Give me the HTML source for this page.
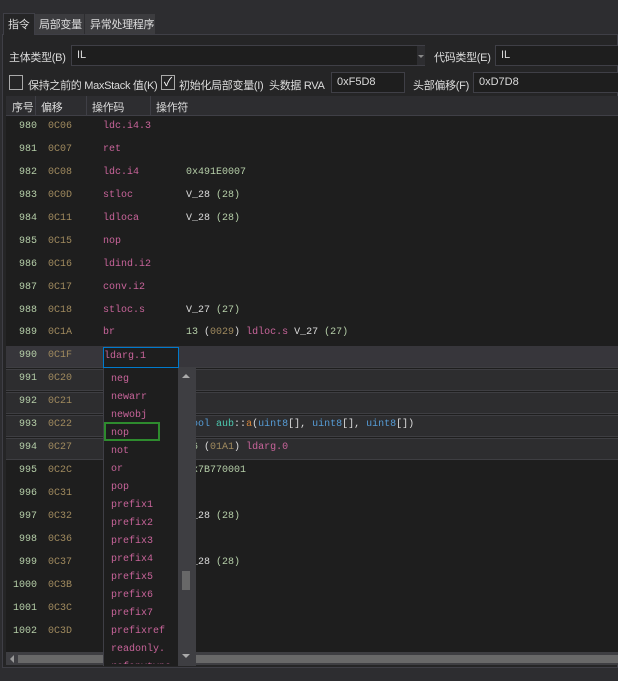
<!DOCTYPE html>
<html><head><meta charset="utf-8"><style>
*{margin:0;padding:0;box-sizing:border-box}
body{width:618px;height:681px;background:#2d2d30;position:relative;overflow:hidden;font-family:"Liberation Sans","Noto Sans CJK SC",sans-serif;font-size:11px;color:#dcdcdc}
.a{position:absolute}
.mono{font-family:"Liberation Mono","Noto Sans CJK SC",monospace;font-size:10px;white-space:pre}
.n{color:#b5cea8}.o{color:#a08a5e}.p{color:#c8649a}.w{color:#dcdcdc}.g{color:#b5cea8}.t{color:#4ec9b0}.b{color:#569cd6}.or{color:#d7873c}
.lab{position:absolute;font-size:11px;color:#dcdcdc;white-space:nowrap;letter-spacing:-0.3px}
.inp{position:absolute;background:#1e1e1e;border:1px solid #3f3f46;font-size:11px;padding-left:5px;line-height:18px;color:#dcdcdc}
</style></head><body>
<div class="a" style="left:0;top:0;width:618px;height:13px;background:#2d2d30"></div>
<div class="a" style="left:2px;top:34px;width:616px;height:634px;background:#252526;border:1px solid #3f3f46"></div>
<div class="a" style="left:3px;top:13px;width:32px;height:22px;background:#252526;border:1px solid #3f3f46;border-bottom:none"></div>
<div class="lab" style="left:8px;top:16px">指令</div>
<div class="a" style="left:35px;top:14px;width:49px;height:20px;background:#3c3c3f"></div>
<div class="lab" style="left:39px;top:16px">局部变量</div>
<div class="a" style="left:85px;top:14px;width:70px;height:20px;background:#3c3c3f"></div>
<div class="lab" style="left:90px;top:16px">异常处理程序</div>

<div class="lab" style="left:9px;top:49px">主体类型(B)</div>
<div class="inp" style="left:71px;top:45px;width:354px;height:21px">IL</div>
<div class="a" style="left:417px;top:46px;width:8px;height:19px;background:#2d2d30"></div>
<div class="a" style="left:418px;top:55px;width:0;height:0;border-left:3px solid transparent;border-right:3px solid transparent;border-top:3px solid #888"></div>
<div class="lab" style="left:434px;top:49px">代码类型(E)</div>
<div class="inp" style="left:495px;top:45px;width:130px;height:21px">IL</div>

<div class="a" style="left:9px;top:75px;width:14px;height:15px;border:1px solid #aaa;background:#252526"></div>
<div class="lab" style="left:28px;top:77px">保持之前的 MaxStack 值(K)</div>
<div class="a" style="left:161px;top:75px;width:14px;height:15px;border:1px solid #aaa;background:#252526;color:#fff;font-size:12px;line-height:13px;text-align:center">✓</div>
<div class="lab" style="left:179px;top:77px">初始化局部变量(I)</div>
<div class="lab" style="left:269px;top:77px">头数据 RVA</div>
<div class="inp" style="left:331px;top:72px;width:74px;height:21px">0xF5D8</div>
<div class="lab" style="left:413px;top:77px">头部偏移(F)</div>
<div class="inp" style="left:473px;top:72px;width:150px;height:21px">0xD7D8</div>

<div class="a" style="left:6px;top:96px;width:612px;height:20px;background:#2d2d30;border-bottom:1px solid #3f3f46"></div>
<div class="a" style="left:35px;top:96px;width:1px;height:20px;background:#3f3f46"></div>
<div class="a" style="left:86px;top:96px;width:1px;height:20px;background:#3f3f46"></div>
<div class="a" style="left:150px;top:96px;width:1px;height:20px;background:#3f3f46"></div>
<div class="lab" style="left:12px;top:99px">序号</div>
<div class="lab" style="left:41px;top:99px">偏移</div>
<div class="lab" style="left:92px;top:99px">操作码</div>
<div class="lab" style="left:156px;top:99px">操作符</div>

<div class="a" style="left:6px;top:116px;width:612px;height:536px;background:#1e1e1e"></div>
<div class="a" style="left:6px;top:346px;width:612px;height:22px;background:#37363b;border-bottom:1px solid #3e3e42"></div>
<div class="a" style="left:6px;top:369px;width:612px;height:22px;background:#2d2d2f;border-top:1px solid #3e3e42;border-bottom:1px solid #3e3e42"></div>
<div class="a" style="left:6px;top:392px;width:612px;height:22px;background:#2d2d2f;border-top:1px solid #3e3e42;border-bottom:1px solid #3e3e42"></div>
<div class="a" style="left:6px;top:415px;width:612px;height:22px;background:#2d2d2f;border-top:1px solid #3e3e42;border-bottom:1px solid #3e3e42"></div>
<div class="a" style="left:6px;top:438px;width:612px;height:22px;background:#2d2d2f;border-top:1px solid #3e3e42;border-bottom:1px solid #3e3e42"></div>

<div class="mono">
<div class="a" style="left:0;top:121px"><span class="a n" style="left:19px">980</span><span class="a o" style="left:48px">0C06</span><span class="a p" style="left:103px">ldc.i4.3</span></div>
<div class="a" style="left:0;top:144px"><span class="a n" style="left:19px">981</span><span class="a o" style="left:48px">0C07</span><span class="a p" style="left:103px">ret</span></div>
<div class="a" style="left:0;top:167px"><span class="a n" style="left:19px">982</span><span class="a o" style="left:48px">0C08</span><span class="a p" style="left:103px">ldc.i4</span><span class="a g" style="left:186px">0x491E0007</span></div>
<div class="a" style="left:0;top:190px"><span class="a n" style="left:19px">983</span><span class="a o" style="left:48px">0C0D</span><span class="a p" style="left:103px">stloc</span><span class="a w" style="left:186px">V_28 <span class="g">(28)</span></span></div>
<div class="a" style="left:0;top:213px"><span class="a n" style="left:19px">984</span><span class="a o" style="left:48px">0C11</span><span class="a p" style="left:103px">ldloca</span><span class="a w" style="left:186px">V_28 <span class="g">(28)</span></span></div>
<div class="a" style="left:0;top:236px"><span class="a n" style="left:19px">985</span><span class="a o" style="left:48px">0C15</span><span class="a p" style="left:103px">nop</span></div>
<div class="a" style="left:0;top:259px"><span class="a n" style="left:19px">986</span><span class="a o" style="left:48px">0C16</span><span class="a p" style="left:103px">ldind.i2</span></div>
<div class="a" style="left:0;top:282px"><span class="a n" style="left:19px">987</span><span class="a o" style="left:48px">0C17</span><span class="a p" style="left:103px">conv.i2</span></div>
<div class="a" style="left:0;top:305px"><span class="a n" style="left:19px">988</span><span class="a o" style="left:48px">0C18</span><span class="a p" style="left:103px">stloc.s</span><span class="a w" style="left:186px">V_27 <span class="g">(27)</span></span></div>
<div class="a" style="left:0;top:327px"><span class="a n" style="left:19px">989</span><span class="a o" style="left:48px">0C1A</span><span class="a p" style="left:103px">br</span><span class="a g" style="left:186px">13 <span class="w">(</span><span class="o">0029</span><span class="w">)</span> <span class="p">ldloc.s</span> <span class="w">V_27</span> (27)</span></div>
<div class="a" style="left:0;top:350px"><span class="a n" style="left:19px">990</span><span class="a o" style="left:48px">0C1F</span></div>
<div class="a" style="left:0;top:373px"><span class="a n" style="left:19px">991</span><span class="a o" style="left:48px">0C20</span></div>
<div class="a" style="left:0;top:396px"><span class="a n" style="left:19px">992</span><span class="a o" style="left:48px">0C21</span></div>
<div class="a" style="left:0;top:419px"><span class="a n" style="left:19px">993</span><span class="a o" style="left:48px">0C22</span><span class="a w" style="left:186px"><span class="b">bool</span> <span class="t">aub</span>::<span class="or">a</span>(<span class="b">uint8</span>[], <span class="b">uint8</span>[], <span class="b">uint8</span>[])</span></div>
<div class="a" style="left:0;top:442px"><span class="a n" style="left:19px">994</span><span class="a o" style="left:48px">0C27</span><span class="a g" style="left:186px">16 <span class="w">(</span><span class="o">01A1</span><span class="w">)</span> <span class="p">ldarg.0</span></span></div>
<div class="a" style="left:0;top:465px"><span class="a n" style="left:19px">995</span><span class="a o" style="left:48px">0C2C</span><span class="a g" style="left:186px">0x7B770001</span></div>
<div class="a" style="left:0;top:488px"><span class="a n" style="left:19px">996</span><span class="a o" style="left:48px">0C31</span></div>
<div class="a" style="left:0;top:511px"><span class="a n" style="left:19px">997</span><span class="a o" style="left:48px">0C32</span><span class="a w" style="left:186px">V_28 <span class="g">(28)</span></span></div>
<div class="a" style="left:0;top:534px"><span class="a n" style="left:19px">998</span><span class="a o" style="left:48px">0C36</span></div>
<div class="a" style="left:0;top:557px"><span class="a n" style="left:19px">999</span><span class="a o" style="left:48px">0C37</span><span class="a w" style="left:186px">V_28 <span class="g">(28)</span></span></div>
<div class="a" style="left:0;top:580px"><span class="a n" style="left:13px">1000</span><span class="a o" style="left:48px">0C3B</span></div>
<div class="a" style="left:0;top:603px"><span class="a n" style="left:13px">1001</span><span class="a o" style="left:48px">0C3C</span></div>
<div class="a" style="left:0;top:626px"><span class="a n" style="left:13px">1002</span><span class="a o" style="left:48px">0C3D</span></div>
</div>

<div class="a" style="left:103px;top:347px;width:76px;height:21px;border:1px solid #007acc;background:#1e1e1e"></div>
<div class="a mono p" style="left:104px;top:351px">ldarg.1</div>

<div class="a" style="left:6px;top:652px;width:612px;height:13px;background:#3e3e42"></div>
<div class="a" style="left:18px;top:655px;width:600px;height:8px;background:#686868"></div>
<div class="a" style="left:10px;top:655px;width:0;height:0;border-top:4px solid transparent;border-bottom:4px solid transparent;border-right:4px solid #999"></div>

<div class="a" style="left:103px;top:368px;width:93px;height:298px;background:#1e1e1e;border-left:1px solid #3f3f46"></div>
<div class="a" style="left:178px;top:368px;width:18px;height:298px;background:#3e3e42"></div>
<div class="a" style="left:182px;top:374px;width:0;height:0;border-left:4px solid transparent;border-right:4px solid transparent;border-bottom:4px solid #aaa"></div>
<div class="a" style="left:182px;top:571px;width:8px;height:19px;background:#686868"></div>
<div class="a" style="left:182px;top:654px;width:0;height:0;border-left:4px solid transparent;border-right:4px solid transparent;border-top:4px solid #aaa"></div>
<div class="a" style="left:104px;top:422px;width:56px;height:19px;border:2px solid #2e8b2e"></div>
<div class="a mono p" style="left:111px;top:371px;line-height:18px;height:293px;overflow:hidden">neg
newarr
newobj
nop
not
or
pop
prefix1
prefix2
prefix3
prefix4
prefix5
prefix6
prefix7
prefixref
readonly.
refanytype</div>
<div class="a" style="left:0;top:668px;width:618px;height:13px;background:#2d2d30"></div>
</body></html>
